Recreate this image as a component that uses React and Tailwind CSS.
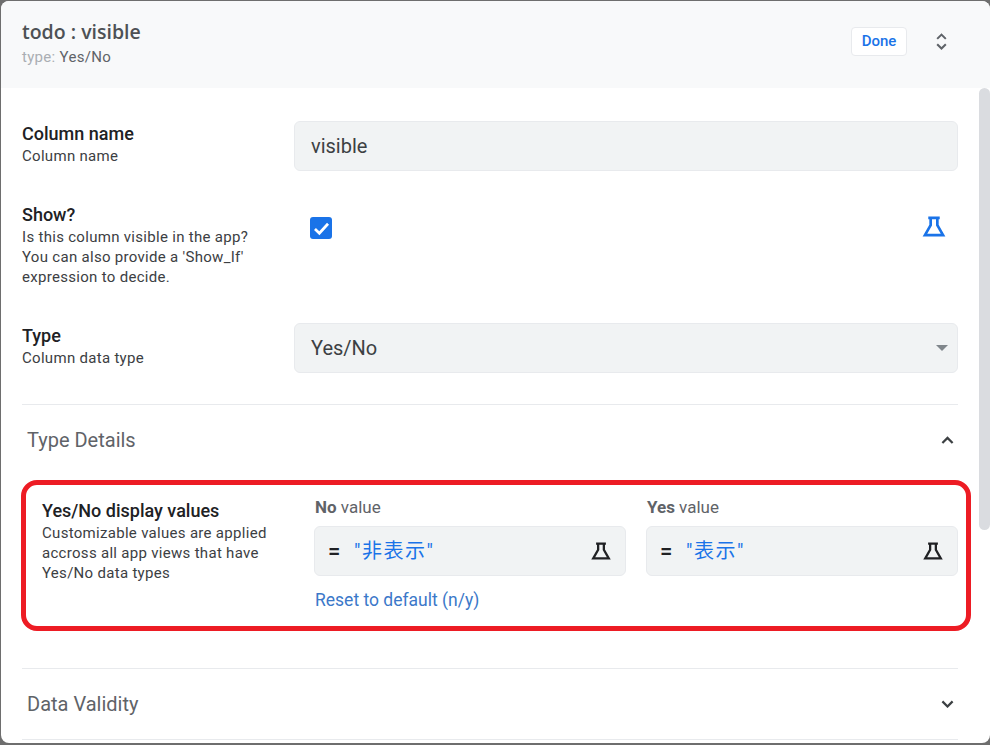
const Flask = ({ className }) => (
  <svg viewBox="0 0 24 22" fill="none" stroke="currentColor" strokeWidth="2.8" className={className}>
    <path d="M6 2h12" />
    <path d="M8.5 2v7.5L2.5 20h19L15.5 9.5V2" />
  </svg>
);

const Chevron = ({ up, className, width = 2 }) => (
  <svg viewBox="0 0 14 9" fill="none" stroke="currentColor" strokeWidth={width} className={className}>
    <path d={up ? "M1.5 7.5 7 2l5.5 5.5" : "M1.5 1.5 7 7l5.5-5.5"} />
  </svg>
);

const Label = ({ title, children }) => (
  <div>
    <div className="text-[18px] font-medium leading-[24px] text-[#202124]">{title}</div>
    <div className="text-[15px] leading-[20px] tracking-[0.3px] text-[#3c4043]">{children}</div>
  </div>
);

const Expression = ({ value }) => (
  <div className="flex h-[50px] items-center justify-between rounded-md border border-[#e8eaed] bg-[#f1f3f4] pl-[13px] pr-[14px]">
    <div className="flex items-center">
      <span className="w-[26px] text-[22px] font-medium text-[#202124]">=</span>
      <span className="text-[20px] tracking-[1.5px] text-[#1a73e8]">"{value}"</span>
    </div>
    <Flask className="h-[18px] w-[20px] text-[#202124]" />
  </div>
);

export default function App() {
  return (
    <div className="h-[745px] w-[990px] overflow-hidden bg-[#6e6e6e] pb-[2px] pl-px pt-px font-['Roboto','Noto_Sans_CJK_JP',sans-serif]">
      <div className="relative flex h-full flex-col overflow-hidden rounded-lg bg-white">
        <div className="flex h-[87px] shrink-0 items-center justify-between bg-[#f8f9fa] pl-[21px] pr-[43px]">
          <div className="-mt-[4px]">
            <div className="font-['Open_Sans',sans-serif] text-[19.5px] font-semibold leading-[28px] text-[#4d5155]">todo : visible</div>
            <div className="mt-[1px] text-[15px] leading-[20px] tracking-[0.3px] text-[#5f6368]">
              <span className="text-[#aaaeb3]">type: </span>Yes/No
            </div>
          </div>
          <div className="-mt-[6px] flex items-center gap-[29px]">
            <button className="h-[29px] w-[56px] rounded-[4px] border border-[#e8eaed] bg-white text-[15px] font-medium text-[#1a73e8]">Done</button>
            <div className="flex w-[11px] flex-col gap-[3px] text-[#5f6368]">
              <Chevron up className="w-[11px]" width={2.6} />
              <Chevron className="w-[11px]" width={2.6} />
            </div>
          </div>
        </div>

        <div className="absolute right-0 top-[87px] h-[442px] w-[11px] rounded-md bg-[#dadce0]" />

        <div className="flex-1 pl-[21px] pr-[32px]">
          <div className="grid grid-cols-[272px_1fr] pt-[33px]">
            <div className="mt-[1px]"><Label title="Column name">Column name</Label></div>
            <div className="flex h-[50px] items-center rounded-md border border-[#e8eaed] bg-[#f1f3f4] px-4 text-xl text-[#3c4043]">visible</div>
          </div>

          <div className="mt-[32px] grid grid-cols-[272px_1fr]">
            <Label title="Show?">
              Is this column visible in the app?<br />
              You can also provide a 'Show_If'<br />
              expression to decide.
            </Label>
            <div className="flex items-start justify-between pl-4 pr-[12px] pt-[14px]">
              <div className="flex h-[22px] w-[22px] items-center justify-center rounded-[3px] bg-[#1a73e8]">
                <svg viewBox="0 0 16 16" fill="none" stroke="white" strokeWidth="2.3" className="h-[19px] w-[19px]">
                  <path d="M2.5 8.5 6.2 12l7.3-8" />
                </svg>
              </div>
              <Flask className="-mt-[1px] h-[21px] w-[24px] text-[#1a73e8]" />
            </div>
          </div>

          <div className="mt-[36px] grid grid-cols-[272px_1fr]">
            <div className="mt-[1px]"><Label title="Type">Column data type</Label></div>
            <div className="flex h-[50px] items-center justify-between rounded-md border border-[#e8eaed] bg-[#f1f3f4] pl-4 pr-[9px] text-xl text-[#3c4043]">
              Yes/No
              <div className="h-0 w-0 border-x-[6px] border-t-[6px] border-x-transparent border-t-[#80868b]" />
            </div>
          </div>

          <div className="mt-[31px] flex h-[71px] items-center justify-between border-t border-[#e8eaed] pl-[5px] pr-[4px]">
            <span className="text-[20px] text-[#5f6368]">Type Details</span>
            <Chevron up className="w-[13px] text-[#3c4043]" width={2.4} />
          </div>

          <div className="-ml-px -mr-[13px] mt-[5px] grid h-[151px] grid-cols-[252px_312px_312px] gap-x-[20px] rounded-[16px] border-[5px] border-[#ed1c24] pl-[16px] pt-[10px]">
            <div className="pt-[4px]">
              <div className="text-[18px] font-medium leading-[24px] text-[#202124]">Yes/No display values</div>
              <div className="whitespace-nowrap text-[15px] leading-[20px] tracking-[0.3px] text-[#3c4043]">
                Customizable values are applied<br />
                accross all app views that have<br />
                Yes/No data types
              </div>
            </div>
            <div>
              <div className="mb-[7px] pl-px text-[17px] leading-[24px] text-[#5f6368]"><b className="font-bold">No</b> value</div>
              <Expression value="非表示" />
              <div className="mt-[12px] pl-px text-[17.5px] leading-[24px] text-[#3b78c9]">Reset to default (n/y)</div>
            </div>
            <div>
              <div className="mb-[7px] pl-px text-[17px] leading-[24px] text-[#5f6368]"><b className="font-bold">Yes</b> value</div>
              <Expression value="表示" />
            </div>
          </div>

          <div className="mt-[37px] flex h-[72px] items-center justify-between border-y border-[#e8eaed] pl-[5px] pr-[4px]">
            <span className="text-[20px] text-[#5f6368]">Data Validity</span>
            <Chevron className="w-[13px] text-[#3c4043]" width={2.4} />
          </div>
        </div>
      </div>
    </div>
  );
}
